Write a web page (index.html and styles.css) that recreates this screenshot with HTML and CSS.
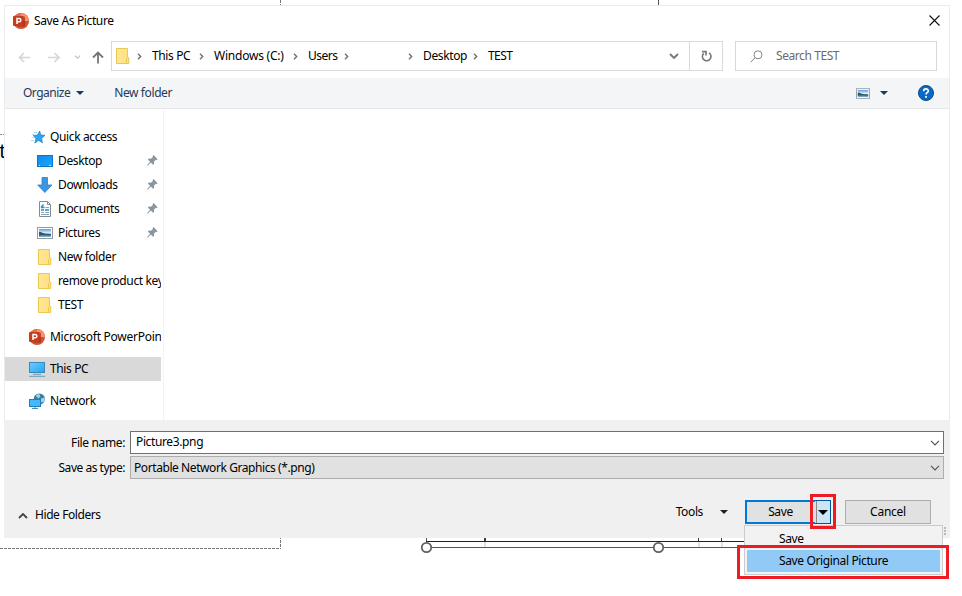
FILE: index.html
```html
<!DOCTYPE html>
<html lang="en">
<head>
<meta charset="utf-8">
<title>Save As Picture</title>
<link rel="stylesheet" href="styles.css">
</head>
<body>
<svg class="defs" width="0" height="0" aria-hidden="true">
  <defs>
    <linearGradient id="gFolder" x2="1"><stop stop-color="#ffe798"/><stop offset="1" stop-color="#ffe07f"/></linearGradient>
    <linearGradient id="gScreen" x2="1" y2="1"><stop stop-color="#1688e8"/><stop offset="1" stop-color="#12aaff"/></linearGradient>
    <linearGradient id="gPc" x2="1" y2="1"><stop stop-color="#6dcdff"/><stop offset="1" stop-color="#22a4f5"/></linearGradient>
    <linearGradient id="gSky" x2="0" y2="1"><stop stop-color="#5b9be6"/><stop offset=".5" stop-color="#e3f3fb"/><stop offset=".7" stop-color="#5b8ea8"/><stop offset="1" stop-color="#84b0ce"/></linearGradient>
    <symbol id="folder" viewBox="0 0 14 16"><path d="M.5.500h11v9h1.300v6H.5z" fill="url(#gFolder)" stroke="#ecc84f"/><path d="M10.500 15.300V10.500l1-1" fill="none" stroke="#ecc84f"/></symbol>
    <symbol id="ppt" viewBox="0 0 16 16"><circle cx="8" cy="8" r="8" fill="#d35230"/><path d="M8 0a8 8 0 0 1 8 8H8z" fill="#ff8f6b"/><path d="M8 0v8H1a8 8 0 0 1 7-8z" fill="#ed6c47"/><rect x="4" y="3.500" width="8" height="10" rx="1" fill="#8e2d18" opacity=".65"/><rect y="3" width="10.500" height="10" rx="1" fill="#c43e1c"/><path d="M4 11V5.500h2.200a1.600 1.600 0 0 1 0 3.300H4" fill="none" stroke="#fff" stroke-width="1.500"/></symbol>
    <symbol id="picture" viewBox="0 0 16 12"><rect x=".5" y=".5" width="15" height="11" fill="#fff" stroke="#929ba1"/><rect x="2" y="2" width="12" height="8" fill="url(#gSky)"/><path d="M2 4.800c2.500 0 4 1.700 7 2l5 .3V8.300c-4 .5-8-.5-12 .4z" fill="#2d5a5d"/></symbol>
    <symbol id="pin" viewBox="0 0 11 11"><path d="M6.500 0l4.200 4.200-1 .8-.8-.2-2 2 .2 2.200-1 .8-2.300-2.300L.6 10.700 0 10.200l3-3.500L.8 4.500l.9-1 2.200.3 2-1.900-.3-1z" fill="#8b979f"/></symbol>
    <symbol id="crumb" viewBox="0 0 5 7"><path d="M1 .8l2.700 2.700L1 6.200" fill="none" stroke="#707070" stroke-width="1.400"/></symbol>
    <symbol id="down" viewBox="0 0 10 6"><path d="M1 .8l4 4 4-4" fill="none" stroke="currentColor" stroke-width="1.200"/></symbol>
    <symbol id="tri" viewBox="0 0 8 4"><path d="M0 0h8L4 4z" fill="currentColor"/></symbol>
  </defs>
</svg>

<svg class="slide" width="962" height="596" viewBox="0 0 962 596">
  <g fill="none" shape-rendering="crispEdges">
    <path d="M280.500 0v548M0 548.500h281" stroke="#777" stroke-dasharray="3 1"/>
    <path d="M658.500 0v6M426.500 530v12" stroke="#555"/>
    <path d="M485 542v5M698.500 542v5M721.500 542v5" stroke="#e3e3e3" stroke-width="2"/>
    <path d="M485 530v12M698.500 530v12M721.500 530v12" stroke="#3c3c3c" stroke-width="1.500"/>
    <path d="M426 541.500h330" stroke="#222"/>
    <path d="M426 547.500h330" stroke="#555"/>
    <path d="M0 134.500h5" stroke="#888" stroke-dasharray="2 1"/>
  </g>
  <g fill="#fff" stroke="#606060" stroke-width="1.800"><circle cx="426.500" cy="547.500" r="4.700"/><circle cx="658.500" cy="547.500" r="4.700"/></g>
  <text x="-.5" y="158" class="slide-text">t</text>
</svg>

<main class="dialog">
  <header class="titlebar">
    <svg width="16" height="16"><use href="#ppt"/></svg>
    <h1 class="title">Save As Picture</h1>
    <svg class="close" width="11" height="11"><path d="M.5.500l10 10M10.500.5l-10 10" stroke="#111" stroke-width="1.100"/></svg>
  </header>

  <nav class="navbar">
    <svg class="arrows" width="92" height="14" fill="none">
      <path d="M1 6.500h11M6 2L1.500 6.500 6 11M30 6.500h11M36.500 2l4.500 4.500-4.500 4.500" stroke="#d6d6d6" stroke-width="1.700"/>
      <path d="M57 4.700l2.500 2.500L62 4.700" stroke="#c6c6c6" stroke-width="1.300"/>
      <path d="M80 12.500V1.500M75 6.500l5-5 5 5" stroke="#757575" stroke-width="1.800"/>
    </svg>
    <div class="address">
      <svg width="14" height="16"><use href="#folder"/></svg>
      <div class="crumbs">
        <svg width="5" height="7"><use href="#crumb"/></svg><span class="c1">This PC</span>
        <svg width="5" height="7"><use href="#crumb"/></svg><span class="c2">Windows (C:)</span>
        <svg width="5" height="7"><use href="#crumb"/></svg><span class="c3">Users</span>
        <svg width="5" height="7"><use href="#crumb"/></svg><span class="blank"></span>
        <svg width="5" height="7"><use href="#crumb"/></svg><span class="c4">Desktop</span>
        <svg width="5" height="7"><use href="#crumb"/></svg><span class="c5">TEST</span>
      </div>
      <svg class="history" width="10" height="7" fill="none"><path d="M1 1l4 4 4-4" stroke="#777" stroke-width="1.900"/></svg>
      <div class="refresh"><svg width="11" height="12" fill="none"><path d="M8 2.800A4.300 4.300 0 1 1 2.700 3.300M1 1.600h4v4" stroke="#777" stroke-width="1.600"/></svg></div>
    </div>
    <div class="search">
      <svg width="13" height="13" fill="none" stroke="#858585"><circle cx="8" cy="4.800" r="4"/><path d="M5 7.800L.7 12.200"/></svg>
      <span>Search TEST</span>
    </div>
  </nav>

  <div class="toolbar">
    <span class="organize">Organize</span><svg class="tri" width="8" height="4"><use href="#tri"/></svg>
    <span class="newfolder">New folder</span>
    <svg class="view" width="14" height="11"><use href="#picture"/></svg>
    <svg class="tri view-tri" width="8" height="4"><use href="#tri"/></svg>
    <svg class="help" width="16" height="16"><circle cx="8" cy="8" r="7.500" fill="#0b68c4" stroke="#034a91"/><path d="M5.700 6.200c0-3 4.600-2.900 4.600-.3 0 1.600-2.200 1.500-2.200 3.500M8 10.900v1.800" fill="none" stroke="#fff" stroke-width="1.700"/></svg>
  </div>

  <section class="body">
    <aside class="tree">
      <div class="row top"><svg class="i16" viewBox="0 0 16 16"><path d="M9.700 2l1 4 4.300.3-3.300 2.900.7 4.600-3.800-2.400L4.800 14l1.200-4.600L3.200 6.600l4.200-.5z" fill="#2ca5ee" stroke="#1683cf" stroke-width=".7"/><path d="M4 3.500h3M2 5.500h2M2.500 8.500h2M1 11.500h3" stroke="#8fcdf3" stroke-width=".8"/></svg><span>Quick access</span></div>
      <div class="row sub"><svg class="i16" viewBox="0 0 16 16"><rect x=".5" y="2.500" width="15" height="11" fill="url(#gScreen)" stroke="#0875c9"/><path d="M2 12.500h1M12 12.500h2" stroke="#aee0ff"/></svg><span>Desktop</span><svg class="pin"><use href="#pin"/></svg></div>
      <div class="row sub"><svg class="i16" viewBox="0 0 16 16"><path d="M5 .5h5.500V8H15l-7.200 7.500L.7 8H5z" fill="#3b96e2" stroke="#2f80cb" stroke-width=".8"/></svg><span>Downloads</span><svg class="pin"><use href="#pin"/></svg></div>
      <div class="row sub"><svg class="i16" viewBox="0 0 16 16" fill="none"><path d="M2.500.5h8l3 3v12h-11z" fill="#fff" stroke="#868b90"/><path d="M10.500.5v3h3" stroke="#868b90"/><path d="M8.500 6.500H12M4 11.500h3M8.500 11.500H12M4 13.500h8" stroke="#8ba3b3"/><path d="M4 6.500L6.500 3.500M4 6.500h3.500M8 9h4M4 9h3" stroke="#218bd5" stroke-width="1.300"/></svg><span>Documents</span><svg class="pin"><use href="#pin"/></svg></div>
      <div class="row sub"><svg class="i16 short"><use href="#picture"/></svg><span>Pictures</span><svg class="pin"><use href="#pin"/></svg></div>
      <div class="row sub"><svg class="fold"><use href="#folder"/></svg><span>New folder</span></div>
      <div class="row sub"><svg class="fold"><use href="#folder"/></svg><span>remove product key</span></div>
      <div class="row sub"><svg class="fold"><use href="#folder"/></svg><span>TEST</span></div>
      <div class="row root"><svg class="i16"><use href="#ppt"/></svg><span class="app">Microsoft PowerPoin</span></div>
      <div class="row root selected"><svg class="i16" viewBox="0 0 16 16"><rect x=".5" y="1.500" width="15" height="10" fill="url(#gPc)" stroke="#3a88b8"/><path d="M4 13.300h8M0 15.300h16" stroke="#6a9db8"/></svg><span>This PC</span></div>
      <div class="row root"><svg class="i16" viewBox="0 0 16 16"><circle cx="10.300" cy="6" r="5.600" fill="#347ea5"/><path d="M6.500 2.800l3.500-2 1.500 2.500-2 2.200zM12 5.500l3.500-1v4l-3.500 1z" fill="#a5d1e6"/><rect x=".5" y="6.500" width="11" height="7" fill="#44b8fc" stroke="#237eb3"/><path d="M6 13.500v2M3 15.500h6" stroke="#4c91b4"/></svg><span>Network</span></div>
    </aside>
    <div class="files"></div>
  </section>

  <footer class="footer">
    <div class="fields">
      <label class="f1">File name:</label>
      <div class="field name"><span>Picture3.png</span><svg width="10" height="6"><use href="#down"/></svg></div>
      <label class="f3">Save as type:</label>
      <div class="field type"><span>Portable Network Graphics (*.png)</span><svg width="10" height="6"><use href="#down"/></svg></div>
    </div>
    <div class="actions">
      <svg class="hide-icon" width="10" height="6" fill="none"><path d="M1 5l4-4 4 4" stroke="#444" stroke-width="1.800"/></svg>
      <span class="hide">Hide Folders</span>
      <span class="tools">Tools</span><svg class="tools-tri" width="8" height="4"><use href="#tri"/></svg>
      <div class="save"><span class="save-main">Save</span><span class="save-drop"><svg width="10" height="5"><path d="M0 0h10L5 5z"/></svg></span></div>
      <div class="cancel">Cancel</div>
    </div>
    <svg class="grip" width="2" height="8"><path d="M0 0h2v2H0zM0 3h2v2H0zM0 6h2v2H0z" fill="#b9b9b9"/></svg>
  </footer>
</main>

<div class="menu">
  <div class="item">Save</div>
  <div class="item active">Save Original Picture</div>
</div>
<div class="mark mark-arrow"></div>
<div class="mark mark-item"></div>
</body>
</html>
```
FILE: styles.css
```css
* { box-sizing: border-box; }
body { margin: 0; width: 962px; height: 596px; overflow: hidden; position: relative; background: #fff; color: #000; font: 12px/16px "Noto Sans", "Open Sans", sans-serif; letter-spacing: -0.37px; white-space: nowrap; }
svg { display: block; flex: none; }
.defs { position: absolute; }
.slide { position: absolute; left: 0; top: 0; }
.slide-text { font: 20px "Liberation Sans", sans-serif; }

.dialog { position: absolute; left: 4px; top: 5px; width: 946px; height: 533px; background: #fff; border: 1px solid #ebebeb; border-bottom: 0; display: flex; flex-direction: column; }

.titlebar { height: 30px; display: flex; align-items: center; padding: 0 9px 0 8px; }
.title { margin: 0 auto 0 5px; font-size: 12px; font-weight: 400; }
.close { margin-top: -2px; }

.navbar { height: 42px; display: flex; align-items: center; padding: 0 12px 0 13px; }
.arrows { margin-right: 1px; margin-top: 1px; }
.address { width: 612px; height: 30px; margin-top: -2px; border: 1px solid #d9d9d9; display: flex; align-items: center; padding-left: 4px; }
.crumbs { flex: 1; display: flex; align-items: center; padding-left: 7px; }
.crumbs span { margin-left: 10px; flex: none; }
.c1 { width: 47px; }
.c2 { width: 79px; letter-spacing: -0.22px; }
.c3 { width: 36px; letter-spacing: -0.5px; }
.blank { width: 49px; }
.c4 { width: 39px; }
.crumbs .c4 { width: 50px; }
.c5 { letter-spacing: -0.6px; }
.history { margin-right: 10px; }
.refresh { width: 33px; height: 28px; border-left: 1px solid #d9d9d9; display: flex; align-items: center; justify-content: center; }
.search { width: 202px; height: 30px; margin: -2px 0 0 12px; border: 1px solid #d9d9d9; display: flex; align-items: center; gap: 13px; padding-left: 14px; color: #6b6b6b; letter-spacing: -0.42px; }

.toolbar { height: 31px; background: #f4f5f7; border-bottom: 1px solid #e6e7e8; color: #1e395b; display: flex; align-items: center; padding: 0 15px 0 18px; letter-spacing: -0.4px; }
.organize { letter-spacing: -0.5px; }
.toolbar .tri { margin-left: 6px; }
.newfolder { margin: 0 auto 0 30px; }
.toolbar .view-tri { margin: 0 30px 0 10px; }

.body { height: 311px; display: flex; }
.tree { width: 159px; padding: 16px 3px 0 0; border-right: 1px solid #f3f3f3; }
.row { height: 24px; display: flex; align-items: center; overflow: hidden; width: 156px; }
.row span { flex: none; }
.top { padding-left: 25px; }
.top span { margin-left: 4px; }
.sub { padding-left: 32px; }
.sub span { margin-left: 5px; }
.root { padding-left: 24px; margin-bottom: 8px; }
.root span { margin-left: 5px; }
.sub + .root { margin-top: 8px; }
.row .app { letter-spacing: -0.27px; }
.selected { background: #d9d9d9; }
.i16 { width: 16px; height: 16px; }
.short { height: 12px; }
.fold { width: 14px; height: 16px; margin: 0 0 0 1px; }
.fold + span { margin-left: 6px; }
.pin { width: 11px; height: 11px; margin: -1px 3px 0 auto; }
.files { flex: 1; }

.footer { flex: 1; background: #f0f0f0; margin: 0 -1px; padding: 11px 6px 0 14px; position: relative; }
.fields { display: grid; grid-template-columns: 107px 814px; grid-template-rows: 23px 23px; column-gap: 5px; row-gap: 2px; }
.fields label { text-align: right; line-height: 24px; }
.fields .f3 { letter-spacing: -0.48px; }
.field { border: 1px solid #707070; background: #fff; display: flex; justify-content: space-between; align-items: center; padding: 0 3px 0 5px; color: #000; }
.name span { margin-top: -2px; }
.field svg { color: #555; }
.type { background: #e1e1e1; border-color: #adadad; padding-left: 3px; letter-spacing: -0.42px; }
.actions { display: flex; align-items: center; height: 24px; margin-top: 21px; padding-right: 13px; }
.hide-icon { margin-top: 7px; }
.hide { margin: 5px auto 0 7px; letter-spacing: -0.42px; }
.tools-tri { margin: 0 17px 0 17px; color: #222; }
.save { width: 86px; height: 24px; border: 2px solid #0078d7; background: #e1e1e1; display: flex; }
.save-main { flex: 1; text-align: center; line-height: 20px; padding-right: 3px; }
.save-drop { width: 16px; margin: -2px -2px; border: 1px solid #005499; border-left: 0; background: #cce4f7; display: flex; align-items: center; justify-content: flex-end; padding-right: 2px; box-shadow: inset 1px 0 #cce4f7, inset 2px 0 #8b8b8b; }
.cancel { width: 86px; height: 24px; margin-left: 14px; border: 1px solid #adadad; background: #e1e1e1; text-align: center; line-height: 22px; letter-spacing: -0.25px; }
.grip { position: absolute; right: 4px; bottom: 3px; }

.menu { position: absolute; left: 744px; top: 525px; width: 199px; height: 50px; background: #f2f2f2; border: 1px solid #ccc; padding: 2px; }
.item { height: 22px; line-height: 22px; padding-left: 32px; }
.active { background: #91c9f7; }
.mark { position: absolute; border: 3px solid #ed1c24; }
.mark-arrow { left: 810px; top: 494px; width: 26px; height: 35px; }
.mark-item { left: 737px; top: 545px; width: 212px; height: 34px; }
```
